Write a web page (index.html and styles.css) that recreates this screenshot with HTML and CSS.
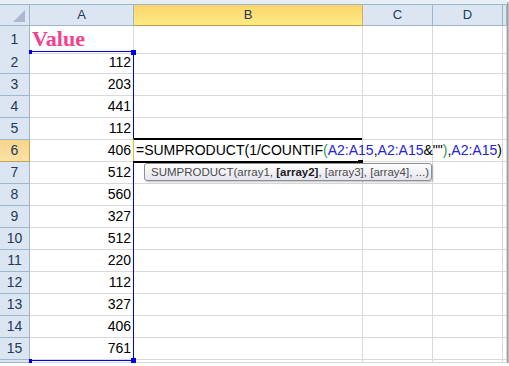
FILE: index.html
```html
<!DOCTYPE html>
<html>
<head>
    <title>SUMPRODUCT distinct count</title>
    <link rel="stylesheet" href="styles.css">
</head>
<body>
<div class="sheet">
    <div class="topbar"></div>
    <div class="row head">
        <div class="corner"><span class="tri"></span></div>
        <div class="colhead">A</div>
        <div class="colhead active">B</div>
        <div class="colhead">C</div>
        <div class="colhead">D</div>
        <div class="colhead"></div>
    </div>
    <div class="row tall">
        <div class="num">1</div><div class="cell title">Value</div><div class="cell"></div><div class="cell"></div><div class="cell"></div><div class="cell"></div>
    </div>
    <div class="row"><div class="num">2</div><div class="cell val">112</div><div class="cell"></div><div class="cell"></div><div class="cell"></div><div class="cell"></div></div>
    <div class="row"><div class="num">3</div><div class="cell val">203</div><div class="cell"></div><div class="cell"></div><div class="cell"></div><div class="cell"></div></div>
    <div class="row"><div class="num">4</div><div class="cell val">441</div><div class="cell"></div><div class="cell"></div><div class="cell"></div><div class="cell"></div></div>
    <div class="row"><div class="num">5</div><div class="cell val">112</div><div class="cell"></div><div class="cell"></div><div class="cell"></div><div class="cell"></div></div>
    <div class="row"><div class="num current">6</div><div class="cell val">406</div><div class="cell"></div><div class="cell"></div><div class="cell"></div><div class="cell"></div></div>
    <div class="row"><div class="num">7</div><div class="cell val">512</div><div class="cell"></div><div class="cell"></div><div class="cell"></div><div class="cell"></div></div>
    <div class="row"><div class="num">8</div><div class="cell val">560</div><div class="cell"></div><div class="cell"></div><div class="cell"></div><div class="cell"></div></div>
    <div class="row"><div class="num">9</div><div class="cell val">327</div><div class="cell"></div><div class="cell"></div><div class="cell"></div><div class="cell"></div></div>
    <div class="row"><div class="num">10</div><div class="cell val">512</div><div class="cell"></div><div class="cell"></div><div class="cell"></div><div class="cell"></div></div>
    <div class="row"><div class="num">11</div><div class="cell val">220</div><div class="cell"></div><div class="cell"></div><div class="cell"></div><div class="cell"></div></div>
    <div class="row"><div class="num">12</div><div class="cell val">112</div><div class="cell"></div><div class="cell"></div><div class="cell"></div><div class="cell"></div></div>
    <div class="row"><div class="num">13</div><div class="cell val">327</div><div class="cell"></div><div class="cell"></div><div class="cell"></div><div class="cell"></div></div>
    <div class="row"><div class="num">14</div><div class="cell val">406</div><div class="cell"></div><div class="cell"></div><div class="cell"></div><div class="cell"></div></div>
    <div class="row"><div class="num">15</div><div class="cell val">761</div><div class="cell"></div><div class="cell"></div><div class="cell"></div><div class="cell"></div></div>
    <div class="row stub"><div class="num"></div><div class="cell"></div><div class="cell"></div><div class="cell"></div><div class="cell"></div><div class="cell"></div></div>

    <!-- reference highlight for A2:A15 -->
    <div class="range">
        <span class="knob tl"></span>
        <span class="knob tr"></span>
        <span class="knob bl"></span>
        <span class="knob br"></span>
    </div>

    <!-- B6 in edit mode -->
    <div class="editbox">=SUMPRODUCT(1/COUNTIF<span class="paren">(</span><span class="ref">A2:A15</span>,<span class="ref">A2:A15</span>&amp;""<span class="paren">)</span>,<span class="ref">A2:A15</span>)</div>
    <span class="handle"></span>

    <div class="tip">SUMPRODUCT(array1, <b>[array2]</b>, [array3], [array4], ...)</div>
</div>
</body>
</html>
```

FILE: styles.css
```css
body {
    margin: 0;
    background-color: #fff;
    font-family: "Liberation Sans", Arial, sans-serif;
    font-size: 14px;
    color: #000;
}

.sheet {
    position: relative;
    width: 507px;
    height: 363px;
    overflow: hidden;
    background-color: #fff;
    box-shadow: 2px 2px 2px rgba(0, 0, 0, 0.4);
}

.topbar {
    height: 4px;
    background-color: #e8eef6;
    border-bottom: 1px solid #9eb6ce;
}

.row {
    display: grid;
    grid-template-columns: 30px 104px 229px 70px 70px 1fr;
    height: 22px;
}

.row.head {
    height: 21px;
}

.row.tall {
    height: 26px;
}

.row.stub {
    height: 3px;
}

.row > div {
    box-sizing: border-box;
}

/* headers */
.corner,
.colhead,
.num {
    background-color: #dce6f2;
    border-right: 1px solid #9eb6ce;
    border-bottom: 1px solid #9eb6ce;
    color: #22395a;
}

.corner {
    position: relative;
}

.tri {
    position: absolute;
    right: 4px;
    bottom: 3px;
    width: 0;
    height: 0;
    border-left: 12px solid transparent;
    border-bottom: 12px solid #a9b8d3;
}

.colhead {
    font-size: 13px;
    line-height: 20px;
    text-align: center;
}

.colhead.active {
    background: linear-gradient(#fcd46a, #feec86);
    border-bottom-color: #c49a3c;
    border-right-color: #d8b251;
}

.num {
    text-align: center;
    line-height: 21px;
}

.row.tall .num {
    line-height: 27px;
}

.num.current {
    background: linear-gradient(#f8d48c, #fbe2a6);
    border-bottom-color: #c9a14e;
    border-right-color: #c9a14e;
}

/* cells */
.cell {
    border-right: 1px solid #d9d9d9;
    border-bottom: 1px solid #d9d9d9;
    line-height: 21px;
}

.cell.val {
    text-align: right;
    padding-right: 2px;
}

.cell.title {
    font-family: "Liberation Serif", "Times New Roman", serif;
    font-weight: bold;
    font-size: 22px;
    line-height: 26px;
    color: #f5418c;
    padding-left: 2px;
}

/* range reference box */
.range {
    position: absolute;
    left: 29px;
    top: 51px;
    width: 104px;
    height: 308px;
    border-top: 1px solid #0000f0;
    border-right: 1px solid #0000f0;
    border-bottom: 1px solid #0000f0;
}

.knob {
    position: absolute;
    background-color: #0000f0;
}

.knob.tl,
.knob.bl {
    left: 0;
    width: 3px;
    height: 4px;
}

.knob.tr,
.knob.br {
    right: -3px;
    width: 5px;
    height: 5px;
}

.knob.tl,
.knob.tr {
    top: -2px;
}

.knob.bl,
.knob.br {
    bottom: -3px;
}

/* cell being edited */
.editbox {
    position: absolute;
    left: 133px;
    top: 138px;
    width: 229px;
    height: 25px;
    box-sizing: border-box;
    border-top: 2px solid #000;
    border-left: 1px solid #cfc81a;
    padding-left: 2px;
    line-height: 21px;
    white-space: nowrap;
    overflow: visible;
    background-color: #fff;
    z-index: 2;
}

.editbox::after {
    content: "";
    position: absolute;
    left: -1px;
    bottom: 0;
    width: 226px;
    height: 2px;
    background-color: #000;
}

.ref {
    color: #2424d8;
}

.paren {
    color: #19a04a;
}

.handle {
    position: absolute;
    left: 358px;
    top: 160px;
    width: 5px;
    height: 5px;
    background-color: #000;
    z-index: 3;
}

/* function tooltip */
.tip {
    position: absolute;
    left: 144px;
    top: 163px;
    width: 288px;
    height: 18px;
    box-sizing: border-box;
    border: 1px solid #8f8f8f;
    border-radius: 3px;
    background: linear-gradient(#ffffff, #e4e5ee);
    box-shadow: 1px 1px 2px rgba(0, 0, 0, 0.25);
    padding-left: 6px;
    font-size: 11.5px;
    line-height: 16px;
    color: #4a4a4a;
    white-space: nowrap;
    z-index: 4;
}

.tip b {
    color: #222;
}
```
